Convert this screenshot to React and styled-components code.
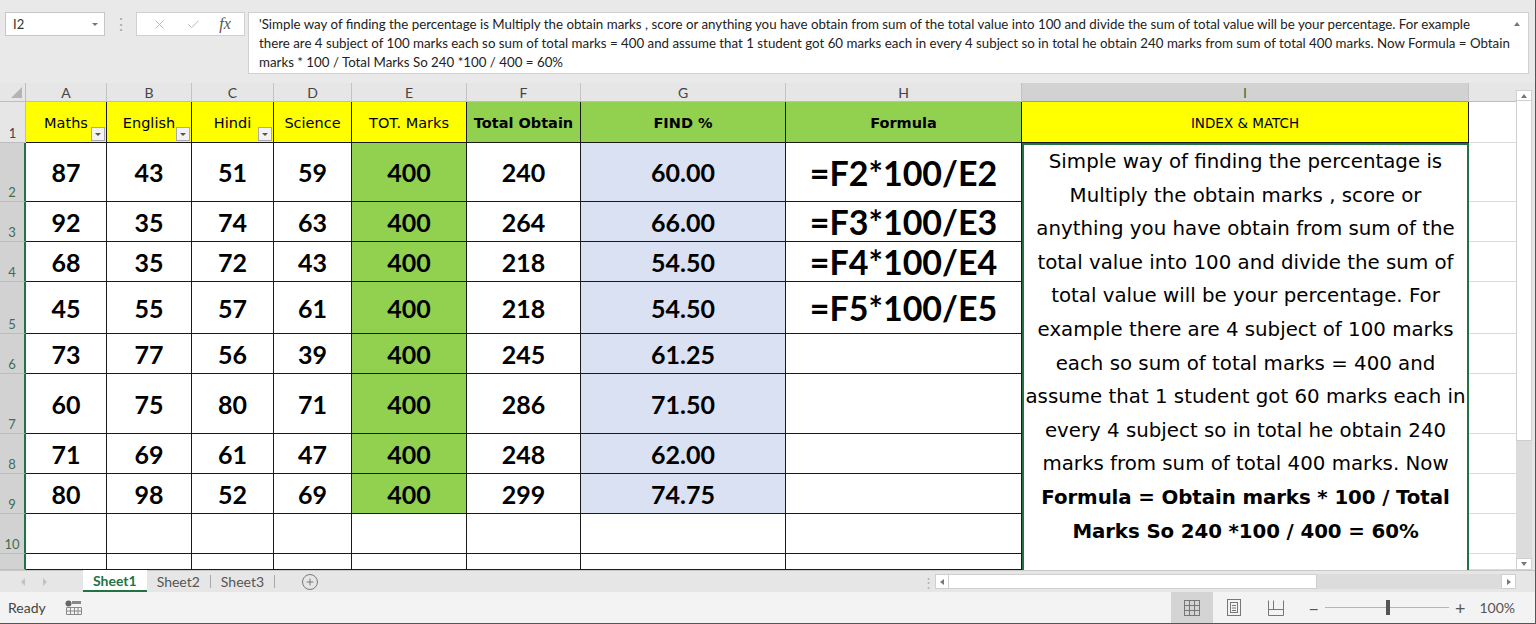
import styled, { createGlobalStyle } from "styled-components";
import { X, Check, CirclePlus } from "lucide-react";

const calibri = `Lato, "Open Sans", "Liberation Sans", sans-serif`;
const comic = `"DejaVu Sans", "Noto Sans", sans-serif`;
const green = "#217346";

const GlobalStyle = createGlobalStyle`
  body {
    margin: 0;
    font-family: ${calibri};
    background: #e6e6e6;
  }
`;

const Window = styled.div`
  width: 1536px;
  height: 624px;
  display: flex;
  flex-direction: column;
  background: #e6e6e6;
  overflow: hidden;
  box-sizing: border-box;
  border-right: 1px solid ${green};
  border-bottom: 1px solid ${green};
`;

/* ---------- formula bar ---------- */

const FormulaBar = styled.div`
  height: 83px;
  flex: none;
  display: flex;
  align-items: flex-start;
  padding: 12px 6px 0 5px;
  box-sizing: border-box;
  background: #e9e9e9;
`;

const NameBox = styled.div`
  width: 100px;
  height: 24px;
  flex: none;
  box-sizing: border-box;
  background: #fff;
  border: 1px solid #c6c6c6;
  display: flex;
  align-items: center;
  justify-content: space-between;
  padding: 0 6px 0 7px;
  font-size: 13px;
  color: #333;
`;

const Caret = styled.span`
  width: 0;
  height: 0;
  border-left: 3px solid transparent;
  border-right: 3px solid transparent;
  border-top: 3px solid #777;
`;

const Dots = styled.div`
  width: 31px;
  height: 24px;
  flex: none;
  display: flex;
  align-items: center;
  justify-content: center;
  color: #a8a8a8;
  font-size: 16px;
`;

const FxBox = styled.div`
  width: 109px;
  height: 24px;
  flex: none;
  box-sizing: border-box;
  background: #fff;
  border: 1px solid #d0d0d0;
  display: flex;
  align-items: center;
  justify-content: space-around;
  padding: 0 4px 0 6px;
  margin-right: 3px;
  color: #b6b6b6;
`;

const Fx = styled.span`
  font-family: "Liberation Serif", serif;
  font-style: italic;
  font-size: 16px;
  color: #555;
`;

const FormulaInput = styled.div`
  flex: 1;
  min-width: 0;
  height: 62px;
  box-sizing: border-box;
  background: #fff;
  border: 1px solid #d0d0d0;
  padding: 2px 30px 0 10px;
  font-size: 13.3px;
  line-height: 19px;
  color: #222;
  position: relative;
  overflow: hidden;
`;

const FormulaLine = styled.div`
  white-space: nowrap;
`;

const UpCaret = styled.span`
  position: absolute;
  right: 8px;
  top: 9px;
  border-left: 3px solid transparent;
  border-right: 3px solid transparent;
  border-bottom: 4px solid #777;
`;

/* ---------- sheet grid ---------- */

const SheetArea = styled.div`
  height: 487px;
  flex: none;
  display: flex;
`;

const Grid = styled.div`
  display: grid;
  grid-template-columns: 26px 81px 85px 82px 78px 115px 114px 205px 236px 447px 48px;
  grid-template-rows: 19px 41px 59px 40px 40px 52px 40px 60px 40px 40px 40px 16px;
  background: #fff;
  overflow: hidden;
`;

const Corner = styled.div`
  background: #e6e6e6;
  border-right: 1px solid #bdbdbd;
  border-bottom: 1px solid #bdbdbd;
  position: relative;
  &::after {
    content: "";
    position: absolute;
    right: 3px;
    bottom: 3px;
    border-left: 11px solid transparent;
    border-bottom: 11px solid #b4b4b4;
  }
`;

const ColHead = styled.div`
  background: ${(p) => (p.$active ? "#d2d2d2" : "#e6e6e6")};
  color: ${(p) => (p.$active ? green : "#444")};
  border-right: 1px solid #c3c3c3;
  border-bottom: 1px solid ${(p) => (p.$active ? "#9b9b9b" : "#bdbdbd")};
  box-sizing: border-box;
  display: flex;
  align-items: center;
  justify-content: center;
  font-size: 14px;
`;

const RowHead = styled.div`
  background: ${(p) => (p.$active ? "#d2d2d2" : "#e6e6e6")};
  color: ${(p) => (p.$active ? "#3d6e50" : "#444")};
  border-bottom: 1px solid #bdbdbd;
  border-right: ${(p) => (p.$active ? `2px solid ${green}` : "1px solid #bdbdbd")};
  box-sizing: border-box;
  display: flex;
  align-items: flex-end;
  justify-content: center;
  padding-bottom: 1px;
  font-size: 13px;
  overflow: hidden;
`;

const Cell = styled.div`
  background: ${(p) => p.$bg || "#fff"};
  border-right: 1px solid ${(p) => (p.$light ? "#dadada" : "#1a1a1a")};
  border-bottom: 1px solid ${(p) => (p.$light ? "#dadada" : "#1a1a1a")};
  box-sizing: border-box;
  display: flex;
  align-items: center;
  justify-content: center;
  white-space: nowrap;
  overflow: hidden;
  position: relative;
  color: #000;
`;

const HeadCell = styled(Cell)`
  font-family: ${comic};
  font-size: ${(p) => p.$size || 14.5}px;
  font-weight: ${(p) => (p.$bold ? 700 : 400)};
  padding-top: 1px;
`;

const ValueCell = styled(Cell)`
  font-family: ${calibri};
  font-weight: 700;
  font-size: ${(p) => p.$size || 25}px;
`;

const FilterButton = styled.span`
  position: absolute;
  right: 1px;
  bottom: 1px;
  width: 14px;
  height: 14px;
  box-sizing: border-box;
  background: #f2f2f2;
  border: 1px solid #a9a9a9;
  display: flex;
  align-items: center;
  justify-content: center;
  &::after {
    content: "";
    border-left: 3px solid transparent;
    border-right: 3px solid transparent;
    border-top: 3px solid #555;
  }
`;

const NoteCell = styled.div`
  grid-column: 10;
  grid-row: 3 / 13;
  border: 2px solid ${green};
  border-bottom: none;
  box-sizing: border-box;
  background: #fff;
  font-family: ${comic};
  font-size: 19.8px;
  line-height: 33.6px;
  text-align: center;
  color: #000;
  padding-top: 0;
`;

const NoteLine = styled.div`
  white-space: nowrap;
  font-weight: ${(p) => (p.$bold ? 700 : 400)};
  letter-spacing: ${(p) => (p.$bold ? "-0.1px" : "0")};
`;

const VScroll = styled.div`
  width: 19px;
  flex: none;
  display: flex;
  flex-direction: column;
  padding: 7px 3px 0 0;
  box-sizing: border-box;
  background: #e6e6e6;
`;

const ArrowBox = styled.div`
  height: ${(p) => p.$h || 11}px;
  width: ${(p) => p.$w || "auto"};
  flex: none;
  box-sizing: border-box;
  background: #fff;
  border: 1px solid #cfcfcf;
  display: flex;
  align-items: center;
  justify-content: center;
  &::after {
    content: "";
    border: 3px solid transparent;
    ${(p) =>
      p.$dir === "up"
        ? "border-bottom: 4px solid #777; border-top: 0;"
        : p.$dir === "down"
        ? "border-top: 4px solid #777; border-bottom: 0;"
        : p.$dir === "left"
        ? "border-right: 4px solid #777; border-left: 0;"
        : "border-left: 4px solid #777; border-right: 0;"}
  }
`;

const VThumb = styled.div`
  height: 340px;
  flex: none;
  background: #fff;
  border: 1px solid #cfcfcf;
  border-top: none;
  box-sizing: border-box;
`;

const VTrack = styled.div`
  flex: 1;
  background: #dcdcdc;
`;

/* ---------- sheet tabs ---------- */

const TabBar = styled.div`
  height: 22px;
  flex: none;
  display: flex;
  align-items: stretch;
  background: #e6e6e6;
  border-top: 1px solid #c8c8c8;
  box-sizing: border-box;
`;

const NavArrows = styled.div`
  width: 83px;
  display: flex;
  align-items: center;
  gap: 18px;
  padding-left: 21px;
  box-sizing: border-box;
`;

const NavArrow = styled.span`
  border-top: 4px solid transparent;
  border-bottom: 4px solid transparent;
  ${(p) =>
    p.$left
      ? "border-right: 4px solid #c2c2c2;"
      : "border-left: 4px solid #c2c2c2;"}
`;

const Tab = styled.div`
  display: flex;
  align-items: center;
  padding: 0 10px;
  font-size: 14px;
  color: ${(p) => (p.$active ? green : "#555")};
  font-weight: ${(p) => (p.$active ? 700 : 400)};
  background: ${(p) => (p.$active ? "#fff" : "transparent")};
  border-bottom: ${(p) => (p.$active ? `2px solid ${green}` : "none")};
  margin-top: -1px;
  box-sizing: border-box;
`;

const TabSep = styled.span`
  width: 1px;
  height: 13px;
  align-self: center;
  background: #a9a9a9;
`;

const AddSheet = styled.div`
  display: flex;
  align-items: center;
  margin-left: 26px;
  color: #777;
`;

const HScrollArea = styled.div`
  margin-left: auto;
  display: flex;
  align-items: center;
  padding-right: 19px;
`;

const SplitDots = styled.span`
  color: #b0b0b0;
  font-size: 13px;
  width: 14px;
  text-align: center;
`;

const HScroll = styled.div`
  width: 581px;
  height: 15px;
  display: flex;
`;

const HThumb = styled.div`
  width: 368px;
  background: #fff;
  border: 1px solid #cfcfcf;
  border-left: none;
  box-sizing: border-box;
`;

const HTrack = styled.div`
  flex: 1;
  background: #dcdcdc;
`;

/* ---------- status bar ---------- */

const StatusBar = styled.div`
  flex: 1;
  display: flex;
  align-items: center;
  background: #f3f3f3;
  padding-left: 8px;
  font-size: 14px;
  color: #444;
`;

const MacroIcon = styled.span`
  margin-left: 19px;
  display: flex;
`;

const ViewGroup = styled.div`
  margin-left: auto;
  display: flex;
  align-items: stretch;
  height: 100%;
`;

const ViewButton = styled.div`
  width: 42px;
  display: flex;
  align-items: center;
  justify-content: center;
  background: ${(p) => (p.$active ? "#d4d4d4" : "transparent")};
`;

const Zoom = styled.div`
  display: flex;
  align-items: center;
  gap: 6px;
  padding: 0 20px 0 12px;
  color: #555;
`;

const Slider = styled.div`
  width: 124px;
  height: 1px;
  background: #b5b5b5;
  position: relative;
`;

const SliderThumb = styled.span`
  position: absolute;
  left: 61px;
  top: -7px;
  width: 4px;
  height: 15px;
  background: #555;
`;

const ZoomSign = styled.span`
  font-size: 18px;
  line-height: 1;
  color: #555;
`;

const ZoomValue = styled.span`
  margin-left: 8px;
`;

/* ---------- data ---------- */

const headers = [
  { t: "Maths", bg: "#ffff00", filter: true },
  { t: "English", bg: "#ffff00", filter: true },
  { t: "Hindi", bg: "#ffff00", filter: true },
  { t: "Science", bg: "#ffff00" },
  { t: "TOT. Marks", bg: "#ffff00" },
  { t: "Total Obtain", bg: "#92d050", bold: true },
  { t: "FIND %", bg: "#92d050", bold: true },
  { t: "Formula", bg: "#92d050", bold: true },
  { t: "INDEX & MATCH", bg: "#ffff00", size: 13.5 },
];

const rows = [
  [87, 43, 51, 59, 400, 240, "60.00", "=F2*100/E2"],
  [92, 35, 74, 63, 400, 264, "66.00", "=F3*100/E3"],
  [68, 35, 72, 43, 400, 218, "54.50", "=F4*100/E4"],
  [45, 55, 57, 61, 400, 218, "54.50", "=F5*100/E5"],
  [73, 77, 56, 39, 400, 245, "61.25", ""],
  [60, 75, 80, 71, 400, 286, "71.50", ""],
  [71, 69, 61, 47, 400, 248, "62.00", ""],
  [80, 98, 52, 69, 400, 299, "74.75", ""],
  ["", "", "", "", "", "", "", ""],
];

const colBg = ["#fff", "#fff", "#fff", "#fff", "#92d050", "#fff", "#d9e1f2", "#fff"];

const formulaLines = [
  "'Simple way of finding the percentage is Multiply the obtain marks , score or anything you have obtain from sum of the total value into 100 and divide the sum of total value will be your percentage. For example",
  "there are 4 subject of 100 marks each so sum of total marks = 400 and assume that 1 student got 60 marks each in every 4 subject so in total he obtain 240 marks from sum of total 400 marks. Now Formula = Obtain",
  "marks * 100 / Total Marks So 240 *100 / 400 = 60%",
];

const noteLines = [
  ["Simple way of finding the percentage is"],
  ["Multiply the obtain marks , score or"],
  ["anything you have obtain from sum of the"],
  ["total value into 100 and divide the sum of"],
  ["total value will be your percentage. For"],
  ["example there are 4 subject of 100 marks"],
  ["each so sum of total marks = 400 and"],
  ["assume that 1 student got 60 marks each in"],
  ["every 4 subject so in total he obtain 240"],
  ["marks from sum of total 400 marks. Now"],
  ["Formula = Obtain marks * 100 / Total", true],
  ["Marks So 240 *100 / 400 = 60%", true],
];

const letters = ["A", "B", "C", "D", "E", "F", "G", "H", "I", ""];

const GridViewIcon = () => (
  <svg width="16" height="16" viewBox="0 0 16 16" fill="none" stroke="#777" strokeWidth="1">
    <rect x="0.5" y="0.5" width="15" height="15" />
    <path d="M5.5 0.5v15M10.5 0.5v15M0.5 5.5h15M0.5 10.5h15" />
  </svg>
);

const PageLayoutIcon = () => (
  <svg width="14" height="17" viewBox="0 0 14 17" fill="none" stroke="#777" strokeWidth="1">
    <rect x="0.5" y="0.5" width="13" height="16" />
    <rect x="3.5" y="3.5" width="7" height="10" />
    <path d="M5 6.5h4M5 9h4M5 11.5h4" />
  </svg>
);

const PageBreakIcon = () => (
  <svg width="16" height="16" viewBox="0 0 16 16" fill="none" stroke="#777" strokeWidth="1">
    <path d="M0.5 0.5v15h15v-15M0.5 9.5h15M5.5 0.5v9" />
  </svg>
);

const MacroSvg = () => (
  <svg width="17" height="15" viewBox="0 0 17 15">
    <circle cx="3.5" cy="3.5" r="3" fill="#666" />
    <rect x="7" y="1" width="9" height="3" fill="#888" />
    <path d="M1.5 7.5h15v7h-15z" fill="none" stroke="#888" />
    <path d="M5.5 7.5v7M9.5 7.5v7M13 7.5v7M1.5 11h15" stroke="#888" />
  </svg>
);

const App = () => {
  return (
    <>
      <GlobalStyle />
      <Window>
        <FormulaBar>
          <NameBox>
            I2
            <Caret />
          </NameBox>
          <Dots>⋮</Dots>
          <FxBox>
            <X size={15} strokeWidth={1.5} />
            <Check size={15} strokeWidth={1.5} />
            <Fx>fx</Fx>
          </FxBox>
          <FormulaInput>
            {formulaLines.map((l, i) => (
              <FormulaLine key={i}>{l}</FormulaLine>
            ))}
            <UpCaret />
          </FormulaInput>
        </FormulaBar>

        <SheetArea>
          <Grid>
            <Corner />
            {letters.map((l, i) => (
              <ColHead key={i} $active={l === "I"}>
                {l}
              </ColHead>
            ))}

            <RowHead>1</RowHead>
            {headers.map((h, i) => (
              <HeadCell key={i} $bg={h.bg} $bold={h.bold} $size={h.size}>
                {h.t}
                {h.filter && <FilterButton />}
              </HeadCell>
            ))}
            <Cell $light />

            <NoteCell>
              {noteLines.map(([t, bold], i) => (
                <NoteLine key={i} $bold={bold}>
                  {t}
                </NoteLine>
              ))}
            </NoteCell>

            {rows.map((r, ri) => [
              <RowHead key={`h${ri}`} $active>
                {ri + 2}
              </RowHead>,
              ...r.map((v, ci) => (
                <ValueCell
                  key={`${ri}-${ci}`}
                  $bg={ri < 8 ? colBg[ci] : "#fff"}
                  $size={ci === 7 ? 34 : 25}
                >
                  {v}
                </ValueCell>
              )),
              <Cell key={`j${ri}`} $light />,
            ])}

            <RowHead $active />
            {colBg.map((_, ci) => (
              <Cell key={`r11-${ci}`} />
            ))}
            <Cell $light />
          </Grid>
          <VScroll>
            <ArrowBox $dir="up" />
            <VThumb />
            <VTrack />
            <ArrowBox $dir="down" $h={12} />
          </VScroll>
        </SheetArea>

        <TabBar>
          <NavArrows>
            <NavArrow $left />
            <NavArrow />
          </NavArrows>
          <Tab $active>Sheet1</Tab>
          <Tab>Sheet2</Tab>
          <TabSep />
          <Tab>Sheet3</Tab>
          <TabSep />
          <AddSheet>
            <CirclePlus size={18} strokeWidth={1.3} />
          </AddSheet>
          <HScrollArea>
            <SplitDots>⋮</SplitDots>
            <HScroll>
              <ArrowBox $dir="left" $h={15} $w="14px" />
              <HThumb />
              <HTrack />
              <ArrowBox $dir="right" $h={15} $w="15px" />
            </HScroll>
          </HScrollArea>
        </TabBar>

        <StatusBar>
          Ready
          <MacroIcon>
            <MacroSvg />
          </MacroIcon>
          <ViewGroup>
            <ViewButton $active>
              <GridViewIcon />
            </ViewButton>
            <ViewButton>
              <PageLayoutIcon />
            </ViewButton>
            <ViewButton>
              <PageBreakIcon />
            </ViewButton>
            <Zoom>
              <ZoomSign>−</ZoomSign>
              <Slider>
                <SliderThumb />
              </Slider>
              <ZoomSign>+</ZoomSign>
              <ZoomValue>100%</ZoomValue>
            </Zoom>
          </ViewGroup>
        </StatusBar>
      </Window>
    </>
  );
};

export default App;
